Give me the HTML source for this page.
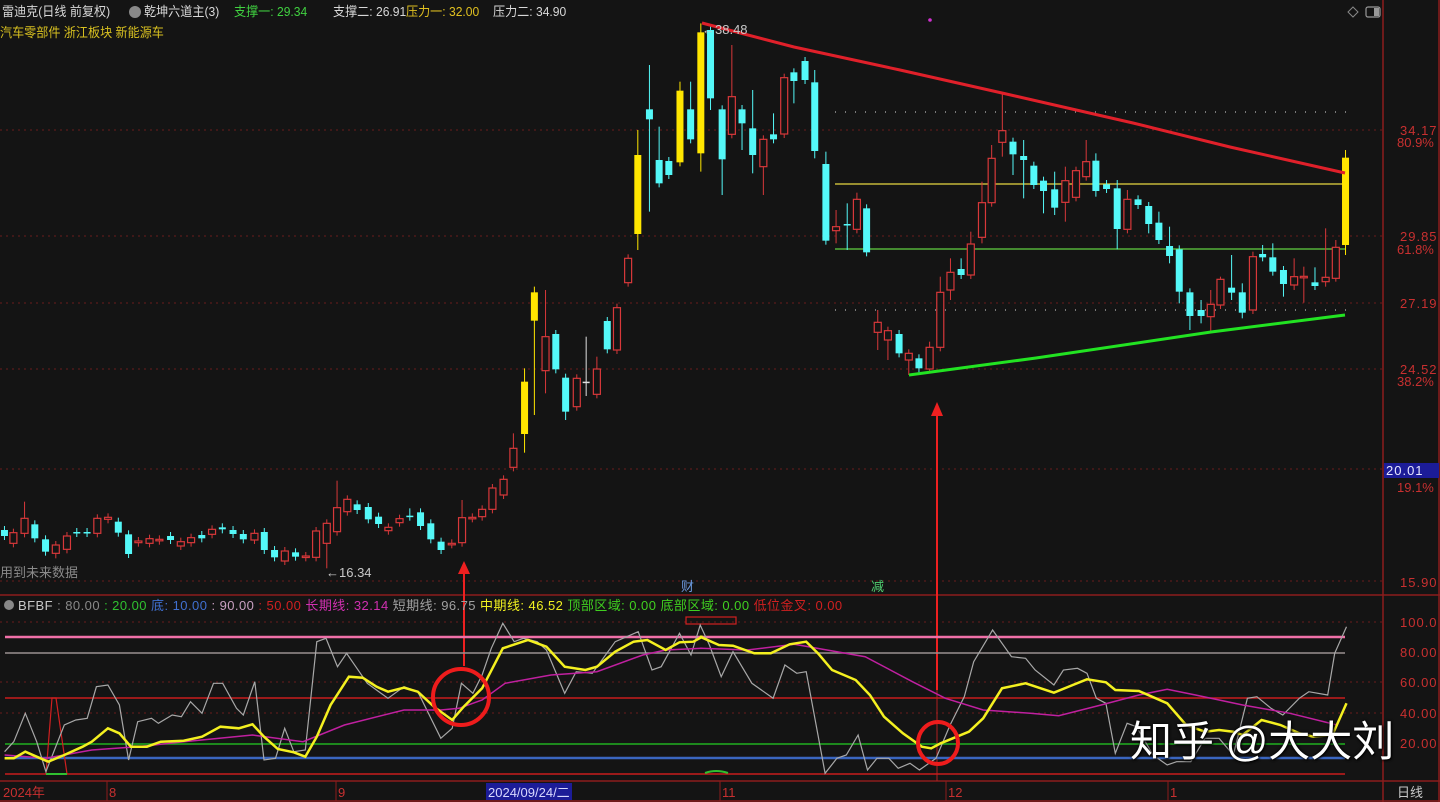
<!DOCTYPE html>
<html><head><meta charset="utf-8">
<style>
html,body{margin:0;padding:0;background:#141414;}
body{width:1440px;height:802px;overflow:hidden;position:relative;font-family:"Liberation Sans","Noto Sans CJK SC",sans-serif;}
svg{position:absolute;left:0;top:0;}
.t{position:absolute;white-space:nowrap;font-size:13px;line-height:15px;}
.h{transform:scaleX(0.93);transform-origin:0 0;}
</style></head><body>
<svg id="s" width="1440" height="802" xmlns="http://www.w3.org/2000/svg">
<g id="grid" stroke="#6a1c1c" stroke-dasharray="2,4" stroke-width="1">
<line x1="0" y1="130" x2="1383" y2="130"/><line x1="0" y1="236" x2="1383" y2="236"/>
<line x1="0" y1="303" x2="1383" y2="303"/><line x1="0" y1="369" x2="1383" y2="369"/>
<line x1="0" y1="469" x2="1383" y2="469"/><line x1="0" y1="581" x2="1383" y2="581"/>
<line x1="0" y1="622" x2="1383" y2="622"/><line x1="0" y1="682" x2="1383" y2="682"/>
<line x1="0" y1="713" x2="1383" y2="713"/>
</g>
<g stroke="#8c1c1c" stroke-width="1.5" fill="none">
<line x1="1383" y1="0" x2="1383" y2="802"/>
<line x1="0" y1="595" x2="1440" y2="595"/>
<line x1="0" y1="781" x2="1440" y2="781"/>
<line x1="1439" y1="0" x2="1439" y2="802"/>
<line x1="0" y1="801" x2="1440" y2="801"/>
</g>
<g stroke="#8c1c1c" stroke-width="1">
<line x1="107" y1="781" x2="107" y2="801"/><line x1="336" y1="781" x2="336" y2="801"/>
<line x1="720" y1="781" x2="720" y2="801"/><line x1="946" y1="781" x2="946" y2="801"/>
<line x1="1168" y1="781" x2="1168" y2="801"/>
</g>
<g stroke="#9a9a9a" stroke-dasharray="1,9" stroke-width="1.5">
<line x1="835" y1="112" x2="1348" y2="112"/><line x1="835" y1="310" x2="1348" y2="310"/>
</g>
<line x1="835" y1="184" x2="1345" y2="184" stroke="#e8d840" stroke-width="1.3"/>
<line x1="835" y1="249" x2="1345" y2="249" stroke="#60d040" stroke-width="1.3"/>
<g id="candles"></g>
<polyline points="702,23 794,47 900,70 1002,93 1133,123 1230,147 1345,173" fill="none" stroke="#e0202a" stroke-width="3"/>
<polyline points="909,375 1036,358 1211,332 1345,315" fill="none" stroke="#22e322" stroke-width="3"/>
<g fill="#ee2020" stroke="#ee2020">
<line x1="464" y1="572" x2="464" y2="666" stroke-width="2"/>
<polygon points="458,574 464,561 470,574" stroke="none"/>
<line x1="937" y1="414" x2="937" y2="690" stroke-width="2"/>
<line x1="937" y1="690" x2="937" y2="781" stroke-width="1" stroke="#b02020"/>
<polygon points="931,416 937,402 943,416" stroke="none"/>
</g>
<circle cx="930" cy="20" r="1.8" fill="#d030d0"/>
<line x1="5" y1="637" x2="1345" y2="637" stroke="#f070a8" stroke-width="2.5"/>
<line x1="5" y1="653" x2="1345" y2="653" stroke="#9a9090" stroke-width="1.5"/>
<line x1="5" y1="698" x2="1345" y2="698" stroke="#c81c1c" stroke-width="1.5"/>
<line x1="5" y1="744" x2="1345" y2="744" stroke="#20b020" stroke-width="1.5"/>
<line x1="5" y1="758" x2="1345" y2="758" stroke="#3a66c0" stroke-width="2.5"/>
<line x1="5" y1="774" x2="1345" y2="774" stroke="#c81c1c" stroke-width="1.5"/>
<polyline points="46,774 52,698 56,698 67,774" fill="none" stroke="#d02020" stroke-width="1.2"/>
<line x1="46" y1="774" x2="67" y2="774" stroke="#30c030" stroke-width="2"/>
<path d="M705,773 Q716,769 728,773" stroke="#30c030" stroke-width="2" fill="none"/>
<rect x="686" y="617" width="50" height="7" fill="none" stroke="#d02020" stroke-width="1.2"/>
<polyline id="gray" fill="none" stroke="#a8a8a8" stroke-width="1.2"/>
<polyline id="mag" fill="none" stroke="#c020a0" stroke-width="1.5"/>
<polyline id="yel" fill="none" stroke="#f4f020" stroke-width="2.5"/>
<ellipse cx="461" cy="697" rx="28" ry="28" fill="none" stroke="#ee1c1c" stroke-width="4"/>
<ellipse cx="938" cy="743" rx="20" ry="21" fill="none" stroke="#ee1c1c" stroke-width="4"/>
<rect x="1384" y="463" width="55" height="15" fill="#1c1c98"/>
<rect x="486" y="783" width="86" height="17" fill="#1c1c98"/>
<polygon points="1353,7 1358,12 1353,17 1348,12" fill="none" stroke="#888" stroke-width="1"/>
<rect x="1366" y="7" width="14" height="10" rx="2" fill="none" stroke="#999" stroke-width="1.2"/>
<rect x="1374" y="8" width="5" height="8" fill="#999"/>
<circle cx="9" cy="605" r="5" fill="#888"/>
<circle cx="135" cy="12" r="6" fill="#888"/>
</svg>

<div class="t h" style="left:2px;top:4px;color:#d8d8d8">雷迪克(日线 前复权)</div>
<div class="t h" style="left:144px;top:4px;color:#d8d8d8">乾坤六道主(3)</div>
<div class="t h" style="left:234px;top:4px;color:#40d040">支撑一: 29.34</div>
<div class="t h" style="left:333px;top:4px;color:#d8d8d8">支撑二: 26.91</div>
<div class="t h" style="left:406px;top:4px;color:#e0c020">压力一: 32.00</div>
<div class="t h" style="left:493px;top:4px;color:#d8d8d8">压力二: 34.90</div>
<div class="t h" style="left:0px;top:25px;color:#d8c020">汽车零部件 浙江板块 新能源车</div>
<div class="t" style="left:0px;top:565px;color:#8a8a8a">用到未来数据</div>
<div class="t" style="left:326px;top:565px;color:#c8c8c8">←16.34</div>
<div class="t" style="left:702px;top:22px;color:#c8c8c8">←38.48</div>
<div class="t" style="left:681px;top:579px;color:#6a9ae0">财</div>
<div class="t" style="left:871px;top:579px;color:#50d070">减</div>

<div class="t" style="left:18px;top:598px;color:#c8c8c8;letter-spacing:0.45px">BFBF <span style="color:#888">: 80.00</span> <span style="color:#30c030">: 20.00</span> <span style="color:#4070d0">底: 10.00</span> <span style="color:#c8a0c0">: 90.00</span> <span style="color:#d02020">: 50.00</span> <span style="color:#d030b0">长期线: 32.14</span> <span style="color:#a0a0a0">短期线: 96.75</span> <span style="color:#f0f020">中期线: 46.52</span> <span style="color:#40d020">顶部区域: 0.00</span> <span style="color:#40d020">底部区域: 0.00</span> <span style="color:#d02020">低位金叉: 0.00</span></div>

<div class="t" style="left:1400px;top:123px;color:#c83030;letter-spacing:1px">34.17</div>
<div class="t" style="left:1397px;top:135px;color:#c83030">80.9%</div>
<div class="t" style="left:1400px;top:229px;color:#c83030;letter-spacing:1px">29.85</div>
<div class="t" style="left:1397px;top:242px;color:#c83030">61.8%</div>
<div class="t" style="left:1400px;top:296px;color:#c83030;letter-spacing:1px">27.19</div>
<div class="t" style="left:1400px;top:362px;color:#c83030;letter-spacing:1px">24.52</div>
<div class="t" style="left:1397px;top:374px;color:#c83030">38.2%</div>
<div class="t" style="left:1386px;top:463px;color:#e8e8ff;letter-spacing:1px">20.01</div>
<div class="t" style="left:1397px;top:480px;color:#c83030">19.1%</div>
<div class="t" style="left:1400px;top:575px;color:#c83030;letter-spacing:1px">15.90</div>
<div class="t" style="left:1400px;top:615px;color:#c83030;letter-spacing:1px">100.0</div>
<div class="t" style="left:1400px;top:645px;color:#c83030;letter-spacing:1px">80.00</div>
<div class="t" style="left:1400px;top:675px;color:#c83030;letter-spacing:1px">60.00</div>
<div class="t" style="left:1400px;top:706px;color:#c83030;letter-spacing:1px">40.00</div>
<div class="t" style="left:1400px;top:736px;color:#c83030;letter-spacing:1px">20.00</div>

<div class="t" style="left:3px;top:785px;color:#c83030">2024年</div>
<div class="t" style="left:109px;top:785px;color:#c83030">8</div>
<div class="t" style="left:338px;top:785px;color:#c83030">9</div>
<div class="t" style="left:488px;top:785px;color:#d8d8ff">2024/09/24/二</div>
<div class="t" style="left:722px;top:785px;color:#c83030">11</div>
<div class="t" style="left:948px;top:785px;color:#c83030">12</div>
<div class="t" style="left:1170px;top:785px;color:#c83030">1</div>
<div class="t" style="left:1397px;top:785px;color:#c8c8c8">日线</div>

<div class="t" style="left:1130px;top:716px;font-size:42px;line-height:52px;color:#fff;text-shadow:0 0 3px #000,1px 1px 2px #000">知乎 @大大刘</div>

<script>
var NS="http://www.w3.org/2000/svg";
var g=document.getElementById('candles');
function add(x,top,bot,t,hi,lo){
 var col=t=='r'?'#d8383a':t=='c'?'#54f8f8':t=='y'?'#ffe600':t=='w'?'#e0e0e0':'#54f8f8';
 if(hi==null)hi=top-4; if(lo==null)lo=bot+4;
 var l=document.createElementNS(NS,'line');
 l.setAttribute('x1',x);l.setAttribute('x2',x);l.setAttribute('y1',hi);l.setAttribute('y2',lo);
 l.setAttribute('stroke',col);l.setAttribute('stroke-width','1');g.appendChild(l);
 var h=Math.max(bot-top,1.5);
 var r=document.createElementNS(NS,'rect');
 r.setAttribute('x',x-3.5);r.setAttribute('y',top);r.setAttribute('width',7);r.setAttribute('height',h);
 if(t=='r'){r.setAttribute('fill','#141414');r.setAttribute('stroke',col);r.setAttribute('stroke-width','1.2');}
 else r.setAttribute('fill',col);
 g.appendChild(r);
}
var A=[[10,780,798,'c'],[30,788,820,'r'],[55,745,790,'r',695],[78,763,805,'c'],[102,808,845,'c'],[125,825,850,'r',null,865],[150,798,838,'r'],[172,786,789,'c'],[195,786,789,'c'],[218,745,790,'r'],[242,742,748,'r'],[265,755,788,'c'],[288,793,852,'c'],[310,813,818,'r'],[335,806,820,'r'],[357,808,812,'r'],[382,798,810,'c'],[405,815,828,'r'],[428,803,818,'r'],[452,795,805,'c'],[475,778,793,'r'],[498,772,778,'c'],[522,780,792,'c'],[545,792,808,'c'],[570,790,810,'r'],[592,786,840,'c'],[615,840,862,'c'],[638,843,873,'r'],[662,847,860,'c'],[685,858,862,'r'],[708,783,862,'r'],[732,760,820,'r',null,895],[755,713,785,'r',632],[778,688,725,'r'],[800,703,720,'c'],[825,711,748,'c'],[848,740,762,'c'],[870,772,782,'r'],[895,746,758,'r'],[918,737,740,'c',715],[942,727,768,'c'],[965,760,808,'c'],[988,815,840,'c'],[1012,820,823,'r'],[1035,743,818,'r',690],[1058,742,745,'r'],[1080,718,740,'r'],[1103,654,718,'r'],[1128,628,675,'r'],[1150,535,592,'r',490],[1175,335,492,'y',295,548],[1197,67,152,'y',50,435],[1222,200,302,'r',60,370],[1245,192,298,'c'],[1267,323,425,'c',null,450],[1292,325,410,'r'],[1313,335,338,'w',200,378],[1337,297,373,'r',260]];
A.forEach(function(a){var f=function(v){return v==null?null:270+v/3;};add(a[0]/2.24,f(a[1]),f(a[2]),a[3],f(a[4]),f(a[5]));});
var B=[[15,933,1018,'c'],[35,893,1020,'r'],[58,745,818,'r'],[78,435,672,'y',360,720],[102,298,328,'c',165,605],[122,450,520,'c',350],[142,453,495,'c'],[165,242,457,'y',215],[187,298,388,'c',215],[208,67,430,'y',40,485],[228,60,265,'c',null,300],[252,298,448,'c',null,555],[272,260,373,'r',105],[293,298,340,'c',285,420],[315,355,435,'c',240,490],[337,388,470,'r',null,555],[358,373,388,'c',310],[380,203,372,'r'],[400,187,213,'c',null,280],[423,153,210,'c'],[443,217,423,'c',180,445],[466,462,692,'c',425],[487,650,662,'r',600,700],[510,642,645,'c',580,720],[530,568,658,'r',548],[550,595,727,'c'],[573,937,967,'r',900,1020],[594,962,990,'r',null,1050],[617,972,1030,'c'],[637,1030,1050,'r',null,1095],[658,1045,1075,'c'],[680,1012,1077,'r',995],[702,847,1012,'r',800],[723,787,840,'r',745,870],[745,777,795,'c',745],[765,702,795,'r',665],[788,578,682,'r',515,700],[808,445,578,'r',405],[830,362,397,'r',250,440],[852,395,433,'c',null,495],[874,438,450,'c',390,565],[895,467,525,'c'],[915,512,543,'c',null,610],[938,538,593,'c',485,615],[960,512,577,'r',470,635],[982,482,562,'r'],[1003,455,500,'r',390],[1023,452,543,'c',430,560],[1045,523,537,'c',510],[1067,535,657,'c',510,718],[1088,568,658,'r',540,670],[1110,568,585,'c'],[1132,588,642,'c',null,670],[1153,638,690,'c',605],[1175,708,738,'c',650,760],[1195,718,845,'c',null,880],[1217,847,918,'c',null,960],[1240,900,918,'c',870,940],[1260,883,920,'r',840,965],[1280,808,885,'r',800],[1303,833,848,'c',735,870],[1325,847,908,'c',820,925],[1347,740,900,'r',725],[1367,732,742,'c',705],[1388,742,785,'c',700],[1410,780,822,'c',null,860],[1432,800,825,'r',745,840],[1452,799,802,'r',770,878],[1475,817,828,'c',772],[1497,802,815,'r',655,830],[1518,712,805,'r',690,815],[1538,443,705,'y',420,735]];
B.forEach(function(a){var f=function(v){return v==null?null:10+v/3;};add(600+a[0]/2.063,f(a[1]),f(a[2]),a[3],f(a[4]),f(a[5]));});
function pl(id,p6,p7){var s=[];p6.forEach(function(p){s.push((p[0]/2.178).toFixed(1)+','+(595+p[1]/3).toFixed(1));});p7.forEach(function(p){s.push((700+p[0]/2.119).toFixed(1)+','+(595+p[1]/3).toFixed(1));});document.getElementById(id).setAttribute('points',s.join(' '));}
pl('yel',[[10,490],[30,490],[55,470],[80,485],[105,500],[140,480],[180,455],[200,440],[235,400],[260,415],[285,455],[320,455],[350,440],[400,437],[440,425],[480,395],[520,400],[550,388],[575,425],[605,462],[640,472],[665,485],[690,425],[720,330],[760,245],[790,248],[820,275],[845,290],[880,278],[910,290],[945,335],[985,375],[1010,335],[1050,280],[1095,160],[1150,135],[1190,155],[1230,215],[1275,225],[1300,215],[1340,170],[1380,140],[1410,135],[1450,165],[1480,142],[1510,140],[1530,125]],
[[0,125],[40,150],[70,152],[115,175],[150,175],[190,148],[225,140],[250,175],[280,225],[330,255],[360,300],[390,365],[430,415],[470,455],[490,460],[510,445],[570,410],[600,370],[640,280],[690,265],[750,293],[790,270],[820,253],[860,262],[880,285],[930,288],[990,325],[1030,390],[1070,410],[1100,405],[1130,410],[1150,420],[1190,375],[1230,390],[1270,415],[1300,425],[1340,420],[1370,325]]);
pl('mag',[[10,480],[100,490],[200,465],[300,455],[400,440],[550,420],[660,440],[750,390],[880,345],[960,345],[1000,340],[1050,315],[1100,265],[1200,240],[1300,230],[1400,180],[1450,165],[1530,160]],
[[0,160],[100,165],[200,148],[350,185],[450,260],[520,310],[600,345],[700,355],[760,362],[850,330],[930,300],[990,283],[1050,300],[1150,330],[1250,355],[1350,390]]);
pl('gray',[[10,470],[30,440],[55,355],[80,440],[100,530],[140,390],[165,375],[190,370],[210,275],[235,270],[260,330],[280,495],[300,380],[330,370],[345,385],[375,360],[395,365],[415,320],[440,355],[465,265],[485,265],[515,340],[530,360],[555,260],[575,495],[600,490],[620,400],[640,470],[665,465],[690,140],[710,130],[735,215],[755,175],[775,215],[800,265],[845,310],[880,275],[910,290],[960,430],[985,400],[1005,265],[1030,295],[1050,240],[1070,160],[1095,85],[1120,140],[1140,130],[1170,140],[1190,165],[1230,295],[1255,230],[1290,235],[1340,140],[1390,110],[1420,225],[1440,215],[1480,115],[1505,180],[1525,90]],
[[20,150],[45,245],[70,170],[110,265],[155,310],[180,210],[205,235],[225,230],[265,535],[290,490],[310,480],[335,420],[355,525],[375,490],[400,490],[420,520],[445,505],[465,525],[500,490],[530,390],[560,305],[580,200],[620,105],[660,185],[690,190],[710,225],[750,270],[770,225],[800,220],[820,235],[840,310],[860,325],[880,475],[905,385],[925,395],[960,480],[990,510],[1010,500],[1040,500],[1070,430],[1100,430],[1130,480],[1160,310],[1180,305],[1210,340],[1235,360],[1270,310],[1290,290],[1330,300],[1345,175],[1370,95]]);
</script>
</body></html>
